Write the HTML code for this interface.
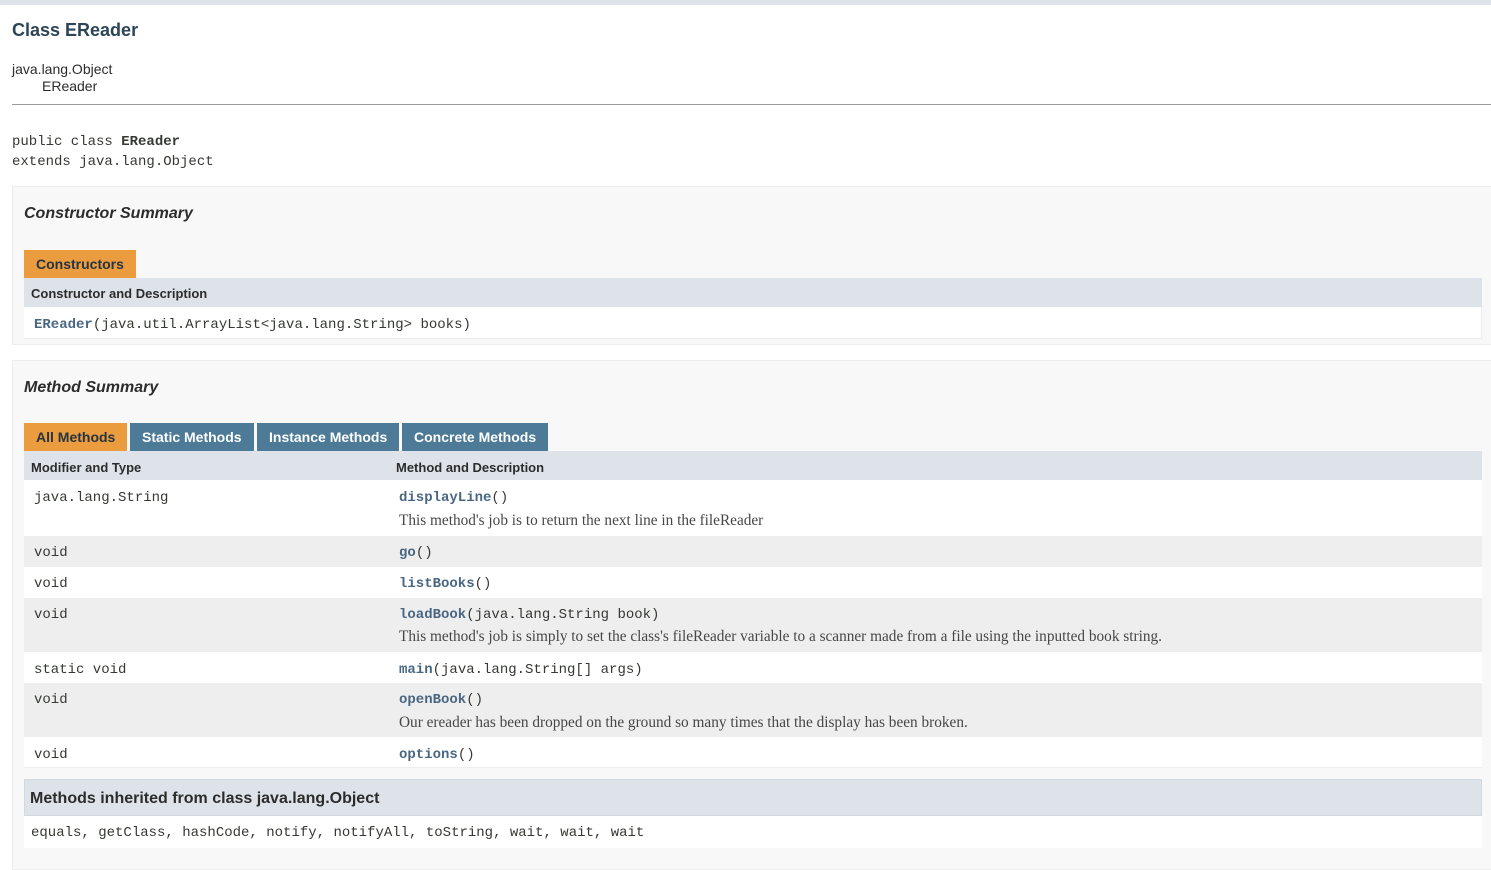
<!DOCTYPE html>
<html><head><style>
*{margin:0;padding:0;box-sizing:border-box}
body{width:1491px;height:858px;overflow:hidden;background:#fff;font-family:"Liberation Sans",sans-serif;color:#353833;position:relative}
.a{position:absolute;white-space:nowrap}
.m{font-family:"Liberation Mono",monospace;font-size:14px;color:#353833}
.lk{color:#4a6782;font-weight:bold}
.s{font-family:"Liberation Serif",serif;font-size:15.3px;color:#474747}
.box{position:absolute;background:#f8f8f8;border:1px solid #ededed}
.h3{font-size:16px;font-weight:bold;font-style:italic;color:#2c2c2c}
.tab{position:absolute;height:28px;font-size:14px;font-weight:bold;line-height:28px;padding-left:12px;color:#fff;background:#4d7a97}
.tab.on{background:#eb9c3f;color:#253441}
.hd{position:absolute;background:#dee3e9;font-size:13px;font-weight:bold;color:#2c2c2c}
.row{position:absolute;left:24px;width:1458px}
</style></head><body>
<div class="a" style="left:0;top:0;width:1491px;height:5px;background:#dee3e9"></div>
<div class="a" style="left:12px;top:20px;font-size:18px;font-weight:bold;color:#2c4557">Class EReader</div>
<div class="a" style="left:12px;top:61px;font-size:14px;color:#2c2c2c">java.lang.Object</div>
<div class="a" style="left:42px;top:78px;font-size:14px;color:#2c2c2c">EReader</div>
<div class="a" style="left:12px;top:104px;width:1479px;height:1px;background:#9a9a9a"></div>
<div class="a m" style="left:12px;top:134px">public class <b>EReader</b></div>
<div class="a m" style="left:12px;top:154px">extends java.lang.Object</div>

<div class="box" style="left:12px;top:186px;width:1480px;height:159px"></div>
<div class="a h3" style="left:24px;top:205px">Constructor Summary</div>
<div class="tab on" style="left:24px;top:250px;width:112px">Constructors</div>
<div class="hd" style="left:24px;top:278px;width:1458px;height:29px;line-height:32px;padding-left:7px">Constructor and Description</div>
<div class="row" style="top:307px;height:32px;background:#fff;border-right:1px solid #eee;border-bottom:1px solid #eee"></div>
<div class="a m" style="left:34px;top:317px"><span class="lk">EReader</span>(java.util.ArrayList&lt;java.lang.String&gt; books)</div>

<div class="box" style="left:12px;top:360px;width:1480px;height:510px"></div>
<div class="a h3" style="left:24px;top:379px">Method Summary</div>
<div class="tab on" style="left:24px;top:423px;width:103px">All Methods</div>
<div class="tab" style="left:130px;top:423px;width:124px">Static Methods</div>
<div class="tab" style="left:257px;top:423px;width:142px">Instance Methods</div>
<div class="tab" style="left:402px;top:423px;width:146px">Concrete Methods</div>
<div class="hd" style="left:24px;top:451px;width:1458px;height:29px;line-height:33px;padding-left:7px">Modifier and Type</div>
<div class="a" style="left:396px;top:451px;height:29px;line-height:33px;font-size:13px;font-weight:bold;color:#2c2c2c">Method and Description</div>

<div class="row" style="top:480px;height:56px;background:#fff"></div>
<div class="row" style="top:536px;height:31px;background:#eeeeef"></div>
<div class="row" style="top:567px;height:31px;background:#fff"></div>
<div class="row" style="top:598px;height:54px;background:#eeeeef"></div>
<div class="row" style="top:652px;height:31px;background:#fff"></div>
<div class="row" style="top:683px;height:54px;background:#eeeeef"></div>
<div class="row" style="top:737px;height:31px;background:#fff;border-bottom:1px solid #eee"></div>

<div class="a m" style="left:34px;top:490px">java.lang.String</div>
<div class="a m" style="left:399px;top:490px"><span class="lk">displayLine</span>()</div>
<div class="a s" style="left:399px;top:512px">This method's job is to return the next line in the fileReader</div>
<div class="a m" style="left:34px;top:545px">void</div>
<div class="a m" style="left:399px;top:545px"><span class="lk">go</span>()</div>
<div class="a m" style="left:34px;top:576px">void</div>
<div class="a m" style="left:399px;top:576px"><span class="lk">listBooks</span>()</div>
<div class="a m" style="left:34px;top:607px">void</div>
<div class="a m" style="left:399px;top:607px"><span class="lk">loadBook</span>(java.lang.String book)</div>
<div class="a s" style="left:399px;top:628px">This method's job is simply to set the class's fileReader variable to a scanner made from a file using the inputted book string.</div>
<div class="a m" style="left:34px;top:662px">static void</div>
<div class="a m" style="left:399px;top:662px"><span class="lk">main</span>(java.lang.String[] args)</div>
<div class="a m" style="left:34px;top:692px">void</div>
<div class="a m" style="left:399px;top:692px"><span class="lk">openBook</span>()</div>
<div class="a s" style="left:399px;top:714px">Our ereader has been dropped on the ground so many times that the display has been broken.</div>
<div class="a m" style="left:34px;top:747px">void</div>
<div class="a m" style="left:399px;top:747px"><span class="lk">options</span>()</div>

<div class="hd" style="left:24px;top:779px;width:1458px;height:37px;line-height:37px;padding-left:5px;font-size:16px;border:1px solid #d0d9e0">Methods inherited from class java.lang.Object</div>
<div class="row" style="top:816px;height:32px;background:#fff"></div>
<div class="a m" style="left:31px;top:825px">equals, getClass, hashCode, notify, notifyAll, toString, wait, wait, wait</div>
</body></html>
